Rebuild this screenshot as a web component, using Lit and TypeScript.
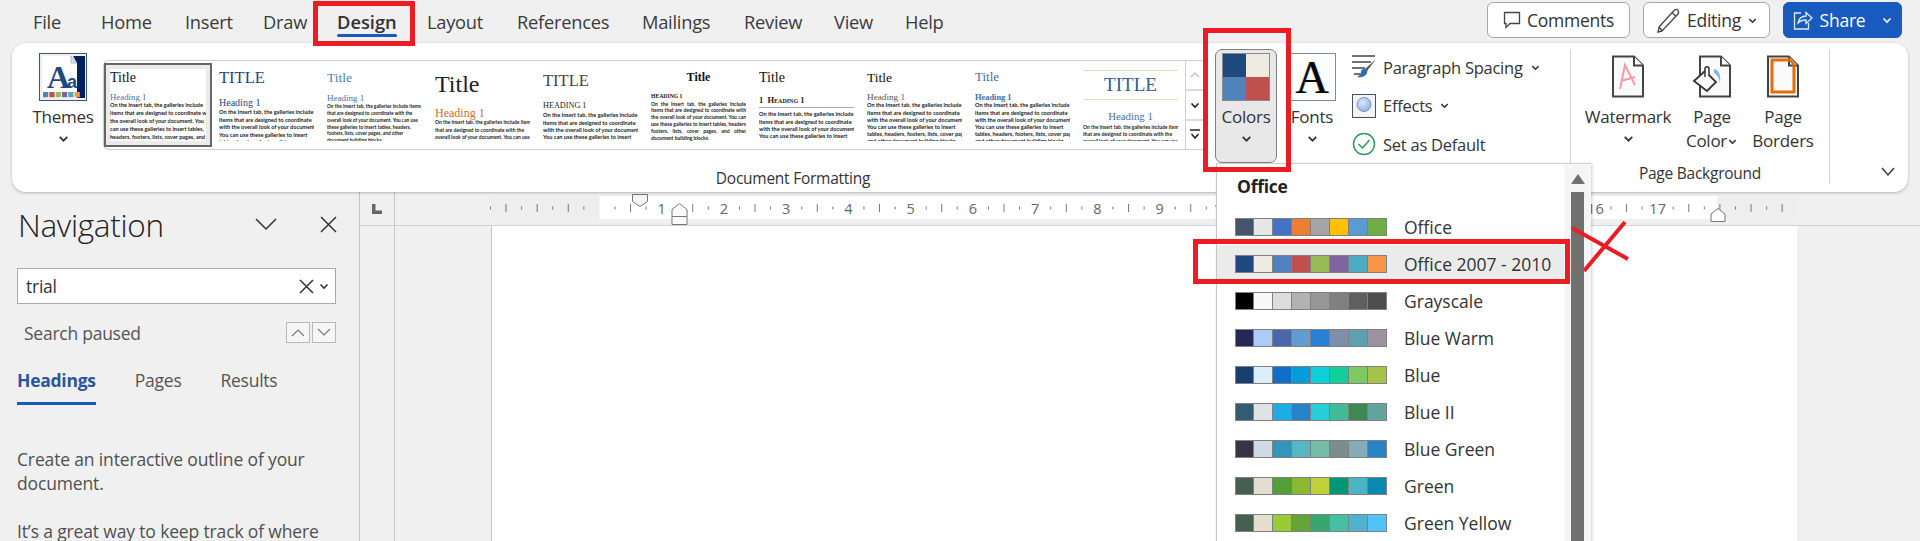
import { LitElement, html, css, svg } from 'lit';
import { customElement } from 'lit/decorators.js';

// tab cells are as wide as the distance between labels in the ribbon
const TABS: [string, number][] = [
  ['File', 68], ['Home', 84], ['Insert', 78], ['Draw', 74], ['Design', 90], ['Layout', 90],
  ['References', 125], ['Mailings', 102], ['Review', 90], ['View', 71], ['Help', 60],
];

const L1 = 'On the Insert tab, the galleries include';
const L2 = 'items that are designed to coordinate';
const L3 = 'with the overall look of your document.';
const L4 = 'You can use these galleries to insert';
const L5 = 'tables, headers, footers, lists, cover pages,';
const L6 = 'and other document building blocks.';

type Theme = { cls: string; title: string; heading: string; lines: string[] };

const THEMES: Theme[] = [
  { cls: 'g1', title: 'Title', heading: 'Heading 1', lines: [L1, 'items that are designed to coordinate with', 'the overall look of your document. You', 'can use these galleries to insert tables,', 'headers, footers, lists, cover pages, and'] },
  { cls: 'g2', title: 'TITLE', heading: 'Heading 1', lines: [L1, L2, L3, L4, L5] },
  { cls: 'g3', title: 'Title', heading: 'Heading 1', lines: ['On the Insert tab, the galleries include items', 'that are designed to coordinate with the', 'overall look of your document. You can use', 'these galleries to insert tables, headers,', 'footers, lists, cover pages, and other', 'document building blocks.'] },
  { cls: 'g4', title: 'Title', heading: 'Heading 1', lines: ['On the Insert tab, the galleries include items', 'that are designed to coordinate with the', 'overall look of your document. You can use'] },
  { cls: 'g5', title: 'TITLE', heading: 'HEADING 1', lines: [L1, L2, L3, L4] },
  { cls: 'g6', title: 'Title', heading: 'HEADING 1', lines: [L1, 'items that are designed to coordinate with', 'the overall look of your document. You can', 'use these galleries to insert tables, headers,', 'footers, lists, cover pages, and other', 'document building blocks.'] },
  { cls: 'g7', title: 'Title', heading: '1  Heading 1', lines: [L1, L2, L3, L4] },
  { cls: 'g8', title: 'Title', heading: 'Heading 1', lines: [L1, L2, L3, L4, L5, L6] },
  { cls: 'g9', title: 'Title', heading: 'Heading 1', lines: [L1, L2, L3, L4, L5, L6] },
  { cls: 'g10', title: 'TITLE', heading: 'Heading 1', lines: ['On the Insert tab, the galleries include items', 'that are designed to coordinate with the', 'overall look of your document. You can use'] },
];

const PALETTES: { name: string; colors: string[]; active?: boolean }[] = [
  { name: 'Office', colors: ['#44546a', '#e7e6e6', '#4472c4', '#ed7d31', '#a5a5a5', '#ffc000', '#5b9bd5', '#70ad47'] },
  { name: 'Office 2007 - 2010', active: true, colors: ['#1f497d', '#eeece1', '#4f81bd', '#c0504d', '#9bbb59', '#8064a2', '#4bacc6', '#f79646'] },
  { name: 'Grayscale', colors: ['#000000', '#f8f8f8', '#dddddd', '#b2b2b2', '#969696', '#808080', '#5f5f5f', '#4d4d4d'] },
  { name: 'Blue Warm', colors: ['#242852', '#accbf9', '#4a66ac', '#629dd1', '#297fd5', '#7f8fa9', '#5aa2ae', '#9d90a0'] },
  { name: 'Blue', colors: ['#17406d', '#dbeff9', '#0f6fc6', '#009dd9', '#0bd0d9', '#10cf9b', '#7cca62', '#a5c249'] },
  { name: 'Blue II', colors: ['#335b74', '#dfe3e5', '#1cade4', '#2683c6', '#27ced7', '#42ba97', '#3e8853', '#62a39f'] },
  { name: 'Blue Green', colors: ['#373545', '#cedbe6', '#3494ba', '#58b6c0', '#75bda7', '#7a8c8e', '#84acb6', '#2683c6'] },
  { name: 'Green', colors: ['#455f51', '#e3ded1', '#549e39', '#8ab833', '#c0cf3a', '#029676', '#4ab5c4', '#0989b1'] },
  { name: 'Green Yellow', colors: ['#455f51', '#e2dfcc', '#99cb38', '#63a537', '#37a76f', '#44c1a3', '#4eb3cf', '#51c3f9'] },
];

const chev = (w = 12, color = '#333') => html`<svg width=${w} height=${w} viewBox="0 0 12 12"><path d="M2.5 4.5 6 8l3.5-3.5" fill="none" stroke=${color} stroke-width="1.6"/></svg>`;

const pageShape = svg`<path d="M2 1.5h21l9 9v31H2z" fill="#fafafa" stroke="#444" stroke-width="2"/><path d="M23 1.5v9h9" fill="#fff" stroke="#444" stroke-width="2"/>`;

@customElement('app-root')
export class AppRoot extends LitElement {
  static styles = css`
    :host {
      display: block;
      position: relative;
      width: 1920px;
      height: 541px;
      overflow: hidden;
      background: #f0f0f0;
      color: #333;
      font-family: "Open Sans", "Noto Sans", sans-serif;
      font-size: 17.5px;
      letter-spacing: -0.25px;
    }
    .top {
      display: flex;
      align-items: center;
      height: 43px;
      padding-left: 33px;
      box-sizing: border-box;
    }
    .tabs { display: flex; font-size: 18.3px; }
    .tab { color: #3b3b3b; }
    .tab span { display: inline-block; position: relative; }
    .tab.on span { font-weight: 600; color: #333; letter-spacing: 0; }
    .tab.on span::after {
      content: '';
      position: absolute;
      left: 0; right: 0; bottom: -3px;
      height: 3px;
      border-radius: 2px;
      background: #185abd;
    }
    .actions { margin-left: auto; display: flex; gap: 13px; margin-right: 18px; margin-top: -3px; }
    .act {
      height: 36px;
      box-sizing: border-box;
      display: flex;
      align-items: center;
      justify-content: center;
      gap: 6px;
      background: #fff;
      border: 1px solid #a8a8a8;
      border-radius: 6px;
    }
    .act.comments { width: 143px; }
    .act.editing { width: 127px; }
    .act.share { width: 119px; background: #185abd; border-color: #185abd; color: #fff; }
    .act.share .s-chev { margin-left: 10px; }

    .ribbon {
      margin: 0 12px;
      height: 149px;
      background: #fff;
      border-radius: 14px;
      box-shadow: 0 1px 3px rgba(0,0,0,.25);
      display: flex;
      box-sizing: border-box;
      position: relative;
    }
    .group { display: flex; flex-direction: column; }
    .group.doc { width: 1558px; }
    .group.bg { width: 258px; border-left: 1px solid #d4d4d4; margin: 7px 0 9px; border-right: 1px solid #d4d4d4; }
    .body { display: flex; height: 115px; }
    .doc .body { padding-top: 10px; }
    .bg .body { padding-top: 3px; padding-left: 2px; }
    .label { text-align: center; font-size: 15.5px; line-height: 20px; }
    .doc .label { padding-left: 4px; }

    .cmd { display: flex; flex-direction: column; align-items: center; font-size: 17px; line-height: 24px; }
    .cmd .ico { height: 48px; display: flex; margin-bottom: 4px; }
    .cmd > svg { margin-top: 3px; }
    .themes { width: 74px; margin-left: 14px; margin-right: 3px; }
    .colors {
      width: 62px;
      height: 114px;
      box-sizing: border-box;
      margin-left: 12px;
      margin-top: -4px;
      padding-top: 3px;
      background: #e8e8e8;
      border: 1px solid #808080;
      border-radius: 7px;
    }
    .fonts { width: 68px; margin-left: 1px; }

    .gallery {
      width: 1100px;
      height: 90px;
      margin-top: 7px;
      box-sizing: border-box;
      display: flex;
      border: 1px solid #cfcfcf;
      border-right: none;
      border-radius: 6px 0 0 6px;
      padding: 2px 0;
    }
    .item {
      width: 108px;
      height: 84px;
      box-sizing: border-box;
      padding: 5px 5px 5px 6px;
      flex: none;
      border: 1px solid transparent;
    }
    .item.sel { background: #ebebeb; border-color: #666; border-width: 2px; padding: 4px; }
    .sel .pv { background: #fff; }
    .pv {
      height: 72px;
      overflow: hidden;
      font-family: "Lato", "Liberation Sans", sans-serif;
      font-size: 5.5px;
      font-weight: 700;
      line-height: 7.9px;
      letter-spacing: 0;
      color: #222;
      white-space: nowrap;
    }
    /* fixed line boxes so each preview's rows can be placed with margins alone */
    .tt { font-family: "Liberation Serif", serif; font-weight: 400; height: 16px; line-height: 16px; color: #111; letter-spacing: 0; }
    .hh { font-family: "Liberation Serif", serif; font-weight: 400; height: 12px; line-height: 12px; letter-spacing: 0; }

    .g1 .tt { font-size: 14px; margin-top: 1px; }
    .g1 .hh { font-size: 8.8px; color: #4f6f9f; margin-top: 5px; margin-bottom: -1px; }
    .g2.pv { font-size: 5.6px; line-height: 7.4px; }
    .g2 .tt { font-size: 16.5px; color: #1f497d; margin-top: 1px; }
    .g2 .hh { font-size: 10px; color: #1f497d; margin-top: 11px; margin-bottom: -0.7px; }
    .g3.pv { font-size: 4.8px; line-height: 6.8px; }
    .g3 .tt { font-size: 13.5px; color: #4f81bd; margin-top: 1px; }
    .g3 .hh { font-size: 9px; color: #4f6f9f; margin-top: 6px; margin-bottom: -0.9px; }
    .g4.pv { font-size: 5px; line-height: 7.6px; }
    .g4 .tt { font-size: 24px; color: #222; margin-top: 7px; }
    .g4 .hh { font-size: 12px; color: #c8702a; margin-top: 15px; margin-bottom: 0.2px; }
    .g5.pv { font-size: 5.6px; line-height: 7.2px; }
    .g5 .tt { font-size: 16.5px; color: #444; margin-top: 4px; }
    .g5 .hh { font-size: 8.2px; color: #222; margin-top: 11px; margin-bottom: -0.6px; }
    .g6.pv { font-size: 5px; line-height: 6.9px; }
    .g6 .tt { font-size: 12px; font-weight: 700; text-align: center; }
    .g6 .hh { font-size: 5.7px; font-weight: 700; color: #111; margin-top: 5px; margin-bottom: -1.5px; }
    .g6 .ln { text-align: justify; text-align-last: justify; }
    .g6 .ln:last-child { text-align-last: left; }
    .g7.pv { font-size: 5.6px; line-height: 7.2px; }
    .g7 .tt { font-size: 14px; margin-top: 1px; }
    .g7 .hh { height: 13px; font-size: 8.5px; font-weight: 700; font-variant: small-caps; color: #222; margin-top: 8px; margin-bottom: 2.4px; border-bottom: 1px solid #aaa; white-space: pre; }
    .g8.pv { font-size: 5.6px; line-height: 7.2px; }
    .g8 .tt { font-size: 13.5px; margin-top: 1px; }
    .g8 .hh { font-size: 9.2px; color: #555; margin-top: 5px; margin-bottom: -1.6px; }
    .g9.pv { font-size: 5.6px; line-height: 7.2px; }
    .g9 .tt { font-size: 13px; color: #44709d; }
    .g9 .hh { font-size: 8.4px; font-weight: 700; color: #44709d; margin-top: 7px; margin-bottom: -2.6px; }
    .g10.pv { font-size: 5px; line-height: 7px; }
    .g10 .tt { height: 28px; line-height: 28px; font-size: 19px; color: #31608f; text-align: center; border-top: 1px solid #d6e3bc; border-bottom: 1px solid #d6e3bc; margin-top: 1px; }
    .g10 .hh { font-size: 10.8px; color: #4a6f9c; text-align: center; margin-top: 10px; margin-bottom: 1.5px; }

    .spin { width: 17px; flex: none; margin-top: -2px; margin-bottom: -2px; margin-left: auto; border-left: 1px solid #cfcfcf; display: flex; flex-direction: column; }
    .spin div { flex: 1; display: flex; align-items: center; justify-content: center; }
    .spin div + div { border-top: 2px solid #dcdcdc; }

    .fx { display: flex; flex-direction: column; margin-left: 6px; margin-top: -5px; }
    .fx-row { display: flex; align-items: center; height: 38.5px; gap: 7px; white-space: nowrap; font-size: 16.5px; }
    .fx-row .i { width: 24px; height: 30px; display: flex; align-items: center; }

    .wm { width: 110px; }
    .pc { width: 58px; }
    .pb { width: 84px; }
    .ico-page { height: 48px; display: flex; align-items: flex-end; padding-bottom: 3px; box-sizing: border-box; margin-bottom: 4px; }
    .inl { display: inline-flex; align-items: center; }
    .collapse { margin-left: 50px; margin-top: 117px; height: 14px; }

    .lower { display: flex; height: 349px; }
    .nav {
      width: 360px;
      box-sizing: border-box;
      border-right: 1px solid #c4c4c4;
      padding: 16px 22px 0 17px;
      flex: none;
    }
    .nav-head { display: flex; align-items: center; height: 32px; }
    .nav-head .name { font-size: 31.5px; font-weight: 300; color: #222; letter-spacing: -0.3px; flex: 1; padding-left: 1px; }
    .nav-head .x { margin-left: 43px; }
    .search {
      margin-top: 28px;
      height: 36px;
      width: 319px;
      box-sizing: border-box;
      background: #fff;
      border: 1px solid #aaa;
      display: flex;
      align-items: center;
      padding: 0 5px 0 8px;
    }
    .search .q { flex: 1; }
    .search .drop { margin-left: 4px; }
    .paused { display: flex; align-items: center; height: 21px; margin-top: 18px; padding-left: 7px; width: 319px; box-sizing: border-box; color: #555; }
    .paused .txt { flex: 1; }
    .paused .mini { width: 24px; height: 21px; box-sizing: border-box; border: 1px solid #b8b8b8; background: #f6f6f6; display: flex; align-items: center; justify-content: center; margin-left: 2px; }
    .ntabs { display: flex; margin-top: 25px; color: #555; height: 33px; }
    .ntab { margin-right: 39px; }
    .ntab.on { font-weight: 700; color: #2b579a; position: relative; }
    .ntab.on::after { content: ''; position: absolute; left: 0; right: 0; top: 34px; height: 3px; background: #185abd; }
    .hint { margin-top: 46px; line-height: 24px; color: #505050; letter-spacing: -0.15px; }
    .hint p { margin: 0 0 24px; }

    .gutter { width: 34px; flex: none; border-right: 1px solid #c8c8c8; }
    .corner { height: 33px; border-bottom: 1px solid #d4d4d4; display: flex; align-items: center; justify-content: center; }
    .work { flex: 1; display: flex; flex-direction: column; min-width: 0; }
    .ruler { height: 34px; box-sizing: border-box; border-bottom: 1px solid #d4d4d4; }
    .ruler svg { display: block; }
    .ruler text { font-family: "Open Sans", sans-serif; font-size: 14.5px; fill: #666; letter-spacing: 0; }
    .docrow { flex: 1; display: flex; padding-left: 96px; }
    .page { width: 1305px; background: #fff; border-left: 1px solid #c4c4c4; }

    .menu {
      position: absolute;
      left: 1216px;
      top: 163px;
      width: 375px;
      height: 378px;
      background: #fff;
      border-left: 1px solid #c6c6c6;
      border-top: 1px solid #d0d0d0;
      box-sizing: border-box;
      display: flex;
      box-shadow: 1px 1px 3px rgba(0,0,0,.2);
    }
    .menu-main { flex: 1; }
    .menu-title { font-weight: 700; color: #222; padding: 11px 0 0 20px; height: 44px; box-sizing: border-box; line-height: 22px; }
    .row { display: flex; align-items: center; height: 37px; padding-left: 18px; }
    .row.active { background: #ebebeb; }
    .strip { display: flex; }
    .sw { width: 19px; height: 18px; box-sizing: border-box; border: 1px solid #808080; }
    .sw + .sw { border-left: none; }
    .row .nm { margin-left: 17px; color: #333; font-size: 17.5px; letter-spacing: 0; }
    .track { width: 27px; background: #f5f5f5; display: flex; flex-direction: column; align-items: center; padding-top: 10px; box-sizing: border-box; }
    .thumb { width: 13px; flex: 1; margin-top: 8px; background: #707070; }

    .mark { position: absolute; box-sizing: border-box; border: 5px solid #ed1c24; pointer-events: none; }
    .m-design { left: 313px; top: 1px; width: 102px; height: 45px; }
    .m-colors { left: 1203px; top: 28px; width: 88px; height: 144px; }
    .m-row { left: 1193px; top: 239px; width: 377px; height: 45px; }
    .cross { position: absolute; left: 1560px; top: 215px; }
  `;

  private ruler() {
    const ox = 599.4 - 395;
    const ticks = [];
    for (let q = -7; q <= 76; q++) {
      const x = ox + (62.25 * q) / 4;
      if (q === 0) continue;
      if (q % 4 === 0 && q > 0 && q <= 68) {
        ticks.push(svg`<text x=${x} y="21.5" text-anchor="middle">${q / 4}</text>`);
      } else if (q % 2 === 0) {
        ticks.push(svg`<line x1=${x} x2=${x} y1="12" y2="20" stroke="#777"/>`);
      } else {
        ticks.push(svg`<line x1=${x} x2=${x} y1="14.5" y2="17.5" stroke="#777"/>`);
      }
    }
    return html`<svg width="1525" height="34" viewBox="0 0 1525 34">
      <rect x="96" y="4" width="1305" height="23" fill="#eeeeee"/>
      <rect x=${ox} y="4" width="1118" height="23" fill="#fff"/>
      ${ticks}
      <path d="M237.500 2.500h15v7l-7.500 5-7.500-5z" fill="#f4f4f4" stroke="#777"/>
      <path d="M277 32.500v-15l7.500-6 7.500 6v15zM277 24.500h15" fill="#fff" stroke="#777"/>
      <path d="M1316 29.500v-7.500l7-5.500 7 5.500v7.500z" fill="#fff" stroke="#777"/>
    </svg>`;
  }

  render() {
    return html`
      <div class="top">
        <div class="tabs">
          ${TABS.map(([t, w]) => html`<div class="tab ${t === 'Design' ? 'on' : ''}" style="width:${w}px"><span>${t}</span></div>`)}
        </div>
        <div class="actions">
          <div class="act comments">
            <svg width="18" height="20" viewBox="0 0 18 20"><path d="M1.500 2.500h15v11H7l-4 4v-4H1.500z" fill="none" stroke="#444" stroke-width="1.300"/></svg>
            <span>Comments</span>
          </div>
          <div class="act editing">
            <svg width="26" height="26" viewBox="0 0 26 26"><path d="M7 24l-4 1 1-5L19 3.500c1.500-1.500 3-1.500 4 0s1 2.500-.5 4zM4 20l3.500 4M17 5.500l4 4" fill="none" stroke="#444" stroke-width="1.300"/></svg>
            <span>Editing</span>${chev(11)}
          </div>
          <div class="act share">
            <svg width="22" height="22" viewBox="0 0 22 22"><path d="M9 4H2.500v16h14v-6M6 14c1-5 4-7 8-7V3.500l6 5.500-6 5.500V11c-3 0-6 1-8 3z" fill="none" stroke="#dfe9f7" stroke-width="1.300"/></svg>
            <span>Share</span><span class="s-chev inl">${chev(12, '#fff')}</span>
          </div>
        </div>
      </div>

      <div class="ribbon">
        <div class="group doc">
          <div class="body">
            <div class="cmd themes">
              <div class="ico">
                <svg width="48" height="48" viewBox="0 0 48 48">
                  <rect x="0.500" y="0.500" width="47" height="47" fill="#fff" stroke="#44546a"/>
                  <rect x="2" y="2" width="44" height="44" fill="#fff" stroke="#c8c8c8" stroke-width="0.600"/>
                  <path d="M34 3h12v42H38V10z" fill="#002060"/>
                  <path d="M32 3v7h6z" fill="#d9e2f0" stroke="#8896aa" stroke-width="0.600"/>
                  <text x="8" y="35" font-family="Liberation Serif, serif" font-size="32" font-weight="700" fill="#1f497d">A</text>
                  <text x="28" y="35" font-family="Liberation Sans, sans-serif" font-size="18" font-weight="700" fill="#1f497d">a</text>
                  ${['#4f81bd', '#c0504d', '#9bbb59', '#8064a2', '#4bacc6', '#f79646'].map(
                    (c, i) => svg`<rect x=${4 + i * 6.3} y="39" width="5.300" height="5.300" fill=${c}/>`
                  )}
                </svg>
              </div>
              <span>Themes</span>
              ${chev(13)}
            </div>
            <div class="gallery">
              ${THEMES.map(
                (t, i) => html`<div class="item ${i === 0 ? 'sel' : ''}">
                  <div class="pv ${t.cls}">
                    <div class="tt">${t.title}</div>
                    <div class="hh">${t.heading}</div>
                    ${t.lines.map((l) => html`<div class="ln">${l}</div>`)}
                  </div>
                </div>`
              )}
              <div class="spin">
                <div><svg width="12" height="12" viewBox="0 0 12 12"><path d="M2 8l4-4 4 4" fill="none" stroke="#c4c4c4" stroke-width="1.500"/></svg></div>
                <div>${chev(12, '#222')}</div>
                <div><svg width="12" height="14" viewBox="0 0 12 14"><path d="M1 2h10" stroke="#222" stroke-width="1.500"/><path d="M2.500 6 6 10l3.500-4" fill="none" stroke="#222" stroke-width="1.500"/></svg></div>
              </div>
            </div>
            <div class="cmd colors">
              <div class="ico">
                <svg width="48" height="48" viewBox="0 0 48 48">
                  <rect x="0" y="0" width="24" height="24" fill="#1f497d"/>
                  <rect x="24" y="0" width="24" height="24" fill="#eeece1"/>
                  <rect x="0" y="24" width="24" height="24" fill="#4f81bd"/>
                  <rect x="24" y="24" width="24" height="24" fill="#c0504d"/>
                  <rect x="0.500" y="0.500" width="47" height="47" fill="none" stroke="#8a8a8a"/>
                </svg>
              </div>
              <span>Colors</span>
              ${chev(13)}
            </div>
            <div class="cmd fonts">
              <div class="ico">
                <svg width="47" height="48" viewBox="0 0 47 48">
                  <rect x="0.500" y="0.500" width="46" height="47" fill="#fff" stroke="#7d8b9f"/>
                  <text x="22.600" y="40" text-anchor="middle" font-family="Liberation Serif, serif" font-size="46" fill="#f08a24">A</text>
                  <text x="23.400" y="40" text-anchor="middle" font-family="Liberation Serif, serif" font-size="46" fill="#2a8fe0">A</text>
                  <text x="23" y="40" text-anchor="middle" font-family="Liberation Serif, serif" font-size="46" fill="#000">A</text>
                </svg>
              </div>
              <span>Fonts</span>
              ${chev(13)}
            </div>
            <div class="fx">
              <div class="fx-row">
                <div class="i">
                  <svg width="24" height="26" viewBox="0 0 24 26">
                    <path d="M0 2h23M0 8h19M0 14h13M2 20h6" stroke="#444" stroke-width="1.300"/>
                    <path d="M24 5 13 15l2 2z" fill="#555"/>
                    <path d="M12 15c3 0 4 2 3 4-1 3-5 5-10 4 2-1 3-2 4-5 0-2 1-3 3-3z" fill="#2b6cb0"/>
                  </svg>
                </div>
                <span>Paragraph Spacing</span>${chev(11)}
              </div>
              <div class="fx-row">
                <div class="i">
                  <svg width="24" height="24" viewBox="0 0 24 24">
                    <defs><radialGradient id="orb" cx="40%" cy="35%" r="70%"><stop offset="0" stop-color="#dbe7fb"/><stop offset="1" stop-color="#8fb0e8"/></radialGradient></defs>
                    <rect x="0.500" y="0.500" width="23" height="23" fill="#f4f4f4" stroke="#44546a"/>
                    <circle cx="12" cy="10.500" r="7" fill="url(#orb)" stroke="#7a95c5"/>
                  </svg>
                </div>
                <span>Effects</span>${chev(11)}
              </div>
              <div class="fx-row">
                <div class="i">
                  <svg width="24" height="24" viewBox="0 0 24 24">
                    <circle cx="12" cy="12" r="10.500" fill="#fff" stroke="#2e9d57" stroke-width="1.500"/>
                    <path d="M6.500 12l4 4 7-8" fill="none" stroke="#2e9d57" stroke-width="1.500"/>
                  </svg>
                </div>
                <span>Set as Default</span>
              </div>
            </div>
          </div>
          <div class="label">Document Formatting</div>
        </div>

        <div class="group bg">
          <div class="body">
            <div class="cmd wm">
              <div class="ico-page">
                <svg width="34" height="43" viewBox="0 0 34 43">
                  ${pageShape}
                  <path d="M9 34 14 10l10 20M10 26l14-4" fill="none" stroke="#f79aa3" stroke-width="2"/>
                </svg>
              </div>
              <span>Watermark</span>
              ${chev(13)}
            </div>
            <div class="cmd pc">
              <div class="ico-page">
                <svg width="40" height="43" viewBox="-6 0 40 43">
                  ${pageShape}
                  <path d="M-4 26l11-10 11 11-9 9z" fill="#fff" stroke="#333" stroke-width="1.800"/>
                  <path d="M7 22v-8c0-3 4-3 4 0v7" fill="#fff" stroke="#333" stroke-width="1.500"/>
                  <path d="M16 14c5 1 7 6 6 14-1-4-2-8-6-10z" fill="#7ab8ee"/>
                </svg>
              </div>
              <span>Page</span>
              <span class="inl">Color ${chev(11)}</span>
            </div>
            <div class="cmd pb">
              <div class="ico-page">
                <svg width="34" height="43" viewBox="0 0 34 43">
                  ${pageShape}
                  <path d="M6 5h18l4 4v28H6z" fill="none" stroke="#e46c0a" stroke-width="3"/>
                </svg>
              </div>
              <span>Page</span>
              <span>Borders</span>
            </div>
          </div>
          <div class="label">Page Background</div>
        </div>
        <div class="collapse">
          <svg width="16" height="14" viewBox="0 0 16 14"><path d="M2 3l6 7 6-7" fill="none" stroke="#333" stroke-width="1.400"/></svg>
        </div>
      </div>

      <div class="lower">
        <div class="nav">
          <div class="nav-head">
            <span class="name">Navigation</span>
            <svg width="22" height="14" viewBox="0 0 22 14"><path d="M1 2l10 10L21 2" fill="none" stroke="#333" stroke-width="1.500"/></svg>
            <svg class="x" width="17" height="17" viewBox="0 0 17 17"><path d="M1 1l15 15M16 1 1 16" fill="none" stroke="#333" stroke-width="1.500"/></svg>
          </div>
          <div class="search">
            <span class="q">trial</span>
            <svg width="15" height="15" viewBox="0 0 15 15"><path d="M1 1l13 13M14 1 1 14" fill="none" stroke="#333" stroke-width="1.500"/></svg>
            <span class="inl drop">${chev(12)}</span>
          </div>
          <div class="paused">
            <span class="txt">Search paused</span>
            <span class="mini"><svg width="14" height="9" viewBox="0 0 14 9"><path d="M1 8l6-6 6 6" fill="none" stroke="#777" stroke-width="1.200"/></svg></span>
            <span class="mini"><svg width="14" height="9" viewBox="0 0 14 9"><path d="M1 1l6 6 6-6" fill="none" stroke="#777" stroke-width="1.200"/></svg></span>
          </div>
          <div class="ntabs">
            <span class="ntab on">Headings</span>
            <span class="ntab">Pages</span>
            <span class="ntab">Results</span>
          </div>
          <div class="hint">
            <p>Create an interactive outline of your document.</p>
            <p>It’s a great way to keep track of where</p>
          </div>
        </div>
        <div class="gutter">
          <div class="corner">
            <svg width="10" height="10" viewBox="0 0 10 10"><path d="M0 0h3.500v6.500H10V10H0z" fill="#666"/></svg>
          </div>
        </div>
        <div class="work">
          <div class="ruler">${this.ruler()}</div>
          <div class="docrow"><div class="page"></div></div>
        </div>
      </div>

      <div class="menu">
        <div class="menu-main">
          <div class="menu-title">Office</div>
          ${PALETTES.map(
            (p) => html`<div class="row ${p.active ? 'active' : ''}">
              <div class="strip">${p.colors.map((c) => html`<div class="sw" style="background:${c}"></div>`)}</div>
              <span class="nm">${p.name}</span>
            </div>`
          )}
        </div>
        <div class="track">
          <svg width="14" height="10" viewBox="0 0 14 10"><path d="M7 0l7 10H0z" fill="#707070"/></svg>
          <div class="thumb"></div>
        </div>
      </div>

      <div class="mark m-design"></div>
      <div class="mark m-colors"></div>
      <div class="mark m-row"></div>
      <svg class="cross" width="80" height="62" viewBox="0 0 80 62">
        <path d="M12 13 68 44M65 7 24 56" fill="none" stroke="#ed1c24" stroke-width="4"/>
      </svg>
    `;
  }
}
